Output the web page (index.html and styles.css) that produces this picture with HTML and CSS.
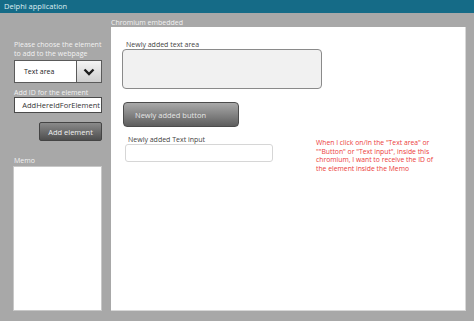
FILE: index.html
```html
<!DOCTYPE html>
<html lang="en">
<head>
    <meta charset="UTF-8">
    <title>Delphi application</title>
    <link rel="stylesheet" href="styles.css">
</head>
<body>
    <!-- Window title -->
    <div class="titlebar">Delphi application</div>

    <div class="window">
        <!-- Left side: controls -->
        <div class="side">
            <p class="label">Please choose the element<br>to add to the webpage</p>
            <div class="select">
                <div class="select-value">Text area</div>
                <div class="select-btn">
                    <svg width="12" height="8" viewBox="0 0 12 8"><path d="M1.5 1.5 L6 6 L10.5 1.5" fill="none" stroke="#1e1e1e" stroke-width="2.4"/></svg>
                </div>
            </div>
            <p class="label">Add ID for the element</p>
            <div class="id-input">AddHereIdForElement</div>
            <button class="add-btn">Add element</button>
            <p class="label memo-label">Memo</p>
            <div class="memo"></div>
        </div>

        <!-- Right side: embedded browser -->
        <div class="browser">
            <p class="label">Chromium embedded</p>
            <div class="page">
                <p class="field-label">Newly added text area</p>
                <div class="textarea"></div>
                <button class="page-btn">Newly added button</button>
                <div class="input-row">
                    <div class="input-group">
                        <p class="field-label">Newly added Text input</p>
                        <div class="text-input"></div>
                    </div>
                    <p class="note">When I click on/In the "Text area" or<br>""Button" or "Text input", inside this<br>chromium, I want to receive the ID of<br>the element inside the Memo</p>
                </div>
            </div>
        </div>
    </div>
</body>
</html>
```

FILE: styles.css
```css
/* Page */
body {
    margin: 0;
    width: 474px;
    height: 321px;
    background: #a8a8a8;
    font-family: 'Open Sans', 'Liberation Sans', sans-serif;
    font-size: 7px;
    overflow: hidden;
}

p {
    margin: 0;
}

/* Title bar */
.titlebar {
    height: 13px;
    line-height: 12px;
    padding-left: 4px;
    background: #156b87;
    color: #dfeef3;
    font-size: 7.5px;
}

.window {
    display: flex;
}

/* Left controls */
.side {
    width: 88px;
    padding: 27px 0 0 14px;
    display: flex;
    flex-direction: column;
}

.label {
    color: #f2f2f2;
    line-height: 9px;
    font-size: 7px;
}

.select {
    display: flex;
    height: 23px;
    margin: 2px 0 5px;
    border: 1px solid #5a5a5a;
    box-sizing: border-box;
}

.select-value {
    flex: 1;
    background: #fff;
    line-height: 21px;
    padding-left: 9px;
    color: #222;
    border-right: 1px solid #5a5a5a;
}

.select-btn {
    width: 24px;
    background: linear-gradient(to bottom, #f4f4f4, #cfcfcf);
    display: flex;
    align-items: center;
    justify-content: center;
}

.id-input {
    height: 16px;
    margin-bottom: 9px;
    box-sizing: border-box;
    border: 1px solid #4a4a4a;
    background: #fff;
    line-height: 14px;
    text-align: right;
    padding-right: 1px;
    color: #333;
    font-size: 7.5px;
}

.add-btn {
    align-self: flex-end;
    width: 63px;
    height: 19px;
    padding: 0;
    border: 1px solid #444;
    border-radius: 2px;
    background: linear-gradient(to bottom, #8a8a8a, #4e4e4e);
    color: #f0f0f0;
    font-family: inherit;
    font-size: 7.5px;
}

.memo-label {
    margin-top: 15px;
}

.memo {
    height: 145px;
    margin: 1px 0 0 -1px;
    background: #fff;
    border: 1px solid #c8c8c8;
    box-sizing: border-box;
}

/* Embedded browser */
.browser {
    margin-left: 9px;
    padding-top: 5px;
}

.page {
    width: 355px;
    height: 284px;
    background: #fff;
    border-right: 1px solid #d8d8d8;
    border-bottom: 1px solid #d8d8d8;
    box-sizing: border-box;
    padding: 13px 0 0 11px;
}

.field-label {
    color: #444;
    line-height: 9px;
    padding-left: 4px;
}

.textarea {
    width: 200px;
    height: 40px;
    box-sizing: border-box;
    border: 1px solid #8a8a8a;
    border-radius: 4px;
    background: #f1f1f1;
}

.page-btn {
    display: block;
    margin: 13px 0 0 1px;
    width: 116px;
    height: 25px;
    padding: 0 0 0 11px;
    text-align: left;
    border: 1px solid #4c4c4c;
    border-radius: 4px;
    background: linear-gradient(to bottom, #a9a9a9, #5e5e5e);
    color: #e6e6e6;
    font-family: inherit;
    font-size: 7.5px;
}

.input-row {
    display: flex;
    margin-top: 8px;
}

.input-group {
    margin-left: 3px;
}

.input-group .field-label {
    padding-left: 3px;
}

.text-input {
    width: 148px;
    height: 18px;
    box-sizing: border-box;
    border: 1px solid #d6d6d6;
    border-radius: 3px;
    background: #fff;
}

.note {
    margin: 4px 0 0 43px;
    color: #ec3b3b;
    line-height: 8.5px;
    font-size: 6.8px;
}
```
